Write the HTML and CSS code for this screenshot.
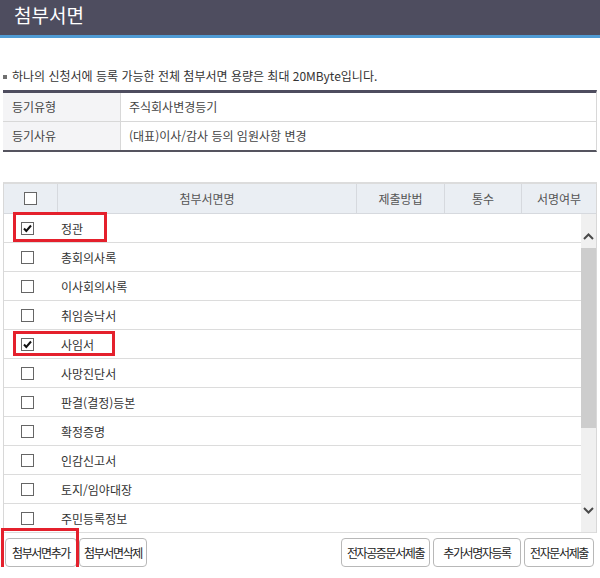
FILE: index.html
```
<!DOCTYPE html>
<html lang="ko">
<head>
<meta charset="utf-8">
<title>첨부서면</title>
<link rel="stylesheet" href="styles.css">
</head>
<body>
<div class="titlebar"><h1>첨부서면</h1></div>

<p class="notice"><span class="bullet"></span>하나의 신청서에 등록 가능한 전체 첨부서면 용량은 최대 20MByte입니다.</p>

<div class="info">
  <div class="label">등기유형</div><div class="value">주식회사변경등기</div>
  <div class="label last">등기사유</div><div class="value last">(대표)이사/감사 등의 임원사항 변경</div>
</div>

<div class="grid">
  <div class="grid-head">
    <div class="hcell"><span class="cbox"></span></div>
    <div class="hcell">첨부서면명</div>
    <div class="hcell">제출방법</div>
    <div class="hcell">통수</div>
    <div class="hcell">서명여부</div>
  </div>
  <div class="grid-body">
    <div class="rows">
      <div class="row"><span class="cbox checked"><svg viewBox="0 0 13 13" width="13" height="13"><path d="M3 6.5 L5.3 9 L10 3.5" fill="none" stroke="#111" stroke-width="2"/></svg></span><span class="name">정관</span><span class="mark mark1"></span></div>
      <div class="row"><span class="cbox"></span><span class="name">총회의사록</span></div>
      <div class="row"><span class="cbox"></span><span class="name">이사회의사록</span></div>
      <div class="row"><span class="cbox"></span><span class="name">취임승낙서</span></div>
      <div class="row"><span class="cbox checked"><svg viewBox="0 0 13 13" width="13" height="13"><path d="M3 6.5 L5.3 9 L10 3.5" fill="none" stroke="#111" stroke-width="2"/></svg></span><span class="name">사임서</span><span class="mark mark2"></span></div>
      <div class="row"><span class="cbox"></span><span class="name">사망진단서</span></div>
      <div class="row"><span class="cbox"></span><span class="name">판결(결정)등본</span></div>
      <div class="row"><span class="cbox"></span><span class="name">확정증명</span></div>
      <div class="row"><span class="cbox"></span><span class="name">인감신고서</span></div>
      <div class="row"><span class="cbox"></span><span class="name">토지/임야대장</span></div>
      <div class="row"><span class="cbox"></span><span class="name">주민등록정보</span></div>
    </div>
    <div class="scrollbar">
      <div class="sb-up"><svg viewBox="0 0 11 7" width="11" height="7"><polyline points="1,6 5.5,1.5 10,6" fill="none" stroke="#4a4a4a" stroke-width="2"/></svg></div>
      <div class="sb-thumb"></div>
      <div class="sb-space"></div>
      <div class="sb-down"><svg viewBox="0 0 11 7" width="11" height="7"><polyline points="1,1 5.5,5.5 10,1" fill="none" stroke="#4a4a4a" stroke-width="2"/></svg></div>
    </div>
  </div>
</div>

<div class="actions">
  <div class="group">
    <span class="btn-wrap"><button class="btn w72">첨부서면추가</button><span class="mark mark3"></span></span>
    <button class="btn w68">첨부서면삭제</button>
  </div>
  <div class="group right">
    <button class="btn w89">전자공증문서제출</button>
    <button class="btn w88">추가서명자등록</button>
    <button class="btn w70">전자문서제출</button>
  </div>
</div>
</body>
</html>
```
FILE: styles.css
```
html, body {
  margin: 0;
  padding: 0;
  background: #fff;
}
body {
  font-family: "Noto Sans CJK KR", "Noto Sans", sans-serif;
  font-size: 12px;
  color: #333;
}

.titlebar {
  height: 35px;
  background: #4e4d5f;
  border-bottom: 3px solid #4f9bd4;
  padding-left: 14px;
}
.titlebar h1 {
  margin: 0;
  font-size: 19px;
  font-weight: normal;
  line-height: 30px;
  color: #fff;
}

.notice {
  margin: 30px 0 0;
  padding-left: 3px;
  line-height: 16px;
  height: 16px;
  display: flex;
  align-items: center;
  color: #333;
}
.bullet {
  display: inline-block;
  width: 4px;
  height: 4px;
  background: #707070;
  margin: 2px 5px 0 0;
}

.info {
  margin: 6px 3px 0;
  display: grid;
  grid-template-columns: 118px 1fr;
  border-top: 3px solid #4e4d5f;
  border-bottom: 2px solid #55545f;
  border-right: 1px solid #d8d8d8;
}
.info .label,
.info .value {
  height: 28px;
  line-height: 28px;
  border-bottom: 1px solid #d8d8d8;
  color: #444;
}
.info .label {
  background: #f4f4f6;
  border-right: 1px solid #d8d8d8;
  padding-left: 9px;
}
.info .value {
  padding-left: 8px;
}
.info .last {
  border-bottom: none;
}

.grid {
  margin: 30px 3px 0;
  border-top: 2px solid #dcdcdc;
  border-left: 1px solid #d8d8d8;
  border-right: 1px solid #d8d8d8;
}
.grid-head {
  display: grid;
  grid-template-columns: 54px 299px 88px 77px 1fr;
  background: #eaeef3;
  border-bottom: 1px solid #d6d9de;
  height: 29px;
}
.hcell {
  display: flex;
  align-items: center;
  justify-content: center;
  border-right: 1px solid #d6d9de;
  color: #555;
}
.hcell:last-child {
  border-right: none;
}

.cbox {
  display: inline-block;
  width: 13px;
  height: 13px;
  box-sizing: border-box;
  border: 1px solid #666;
  background: #fff;
  position: relative;
}
.cbox svg {
  position: absolute;
  left: -1px;
  top: -1px;
}

.grid-body {
  display: flex;
}
.rows {
  flex: 1;
}
.row {
  position: relative;
  height: 28px;
  border-bottom: 1px solid #dcdcdc;
  display: flex;
  align-items: center;
  padding-left: 17px;
}
.row .name {
  margin-left: 27px;
  color: #333;
}

.mark {
  position: absolute;
  box-sizing: border-box;
  border: 3px solid #e4202c;
}
.mark1 {
  left: 9px;
  top: -2px;
  width: 94px;
  height: 30px;
}
.mark2 {
  left: 9px;
  top: 1px;
  width: 102px;
  height: 25px;
}

.scrollbar {
  width: 15px;
  background: #f0f0f0;
  display: flex;
  flex-direction: column;
  border-bottom: 1px solid #dcdcdc;
}
.sb-up {
  height: 34px;
  display: flex;
  justify-content: center;
  align-items: flex-start;
  padding-top: 19px;
  box-sizing: border-box;
}
.sb-thumb {
  height: 180px;
  background: #cdcdcd;
}
.sb-space {
  flex: 1;
}
.sb-down {
  height: 27px;
  display: flex;
  justify-content: center;
  align-items: flex-start;
  padding-top: 2px;
  box-sizing: border-box;
}

.actions {
  display: flex;
  justify-content: space-between;
  margin-top: 5px;
  padding: 0 6px 0 5px;
}
.group {
  display: flex;
  gap: 2px;
}
.group.right {
  gap: 3px;
}
.btn-wrap {
  position: relative;
  display: inline-block;
}
.btn {
  height: 29px;
  padding: 0;
  background: #fff;
  border: 1px solid #b8b8b8;
  border-radius: 4px;
  font-family: "Noto Sans CJK KR", "Noto Sans", sans-serif;
  font-size: 12px;
  letter-spacing: -1.4px;
  color: #222;
  display: block;
}
.w72 { width: 72px; }
.w68 { width: 68px; }
.w89 { width: 89px; }
.w88 { width: 88px; }
.w70 { width: 70px; }
.mark3 {
  left: -4px;
  top: -10px;
  right: -2px;
  bottom: -3px;
}
```
